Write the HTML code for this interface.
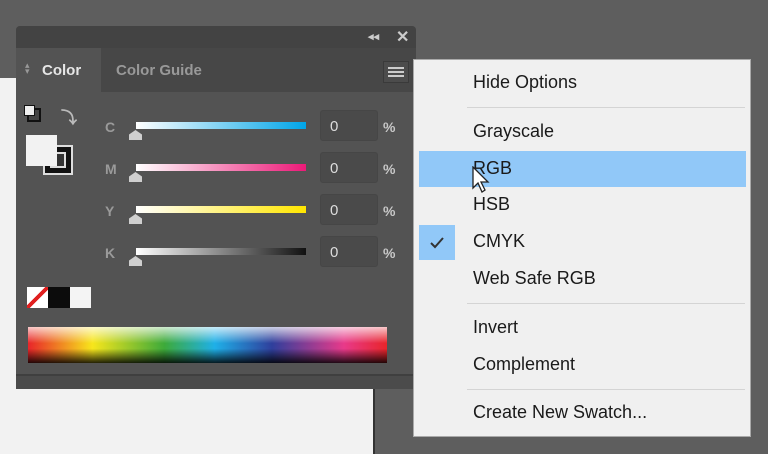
<!DOCTYPE html>
<html><head><style>
*{margin:0;padding:0;box-sizing:border-box}
body{width:768px;height:454px;overflow:hidden;background:#5e5e5e;position:relative;font-family:"Liberation Sans",sans-serif}
.a{position:absolute}
.menu div.t{position:absolute;left:59px;font-size:18px;color:#1a1a1a}
.sep{position:absolute;left:53px;right:5px;height:1px;background:#d4d4d4}
.lbl{position:absolute;left:105px;font-size:14px;font-weight:bold;color:#9a9a9a}
.bar{position:absolute;left:136px;width:170px;height:7px}
.thumb{position:absolute;left:129px;width:13px;height:10px;background:#cfcfcf;clip-path:polygon(50% 0,100% 45%,100% 100%,0 100%,0 45%)}
.box{position:absolute;left:320px;width:58px;height:31px;background:#4a4a4a;border:1px solid #464646;border-radius:3px;color:#ddd;font-size:15px;padding:7px 0 0 9px}
.pct{position:absolute;left:383px;font-size:14px;font-weight:bold;color:#c8c8c8}
</style></head><body>
<div class="a" style="left:0;top:78px;width:16px;height:376px;background:#f2f2f2"></div>
<div class="a" style="left:16px;top:388px;width:357px;height:66px;background:#f2f2f2"></div>
<div class="a" style="left:373px;top:388px;width:2px;height:66px;background:#333"></div>
<!-- panel -->
<div class="a" style="left:16px;top:26px;width:400px;height:363px;background:#535353;border-radius:4px 4px 0 0;overflow:hidden">
 <div class="a" style="left:0;top:0;width:400px;height:22px;background:#434343"></div>
 <div class="a" style="left:352px;top:4px;color:#ccc;font-size:11px;font-weight:bold">◂◂</div>
 <div class="a" style="left:380px;top:1px;color:#ccc;font-size:16px;font-weight:bold">✕</div>
 <div class="a" style="left:0;top:22px;width:400px;height:44px;background:#474747"></div>
 <div class="a" style="left:0;top:22px;width:85px;height:44px;background:#535353"></div>
 <div class="a" style="left:9px;top:36px;color:#999;font-size:9px;line-height:6px">▴<br>▾</div>
 <div class="a" style="left:26px;top:36px;color:#e6e6e6;font-size:15px;font-weight:bold">Color</div>
 <div class="a" style="left:100px;top:36px;color:#999;font-size:15px;font-weight:bold">Color Guide</div>
 <div class="a" style="left:367px;top:35px;width:26px;height:22px;border:1px solid #3a3a3a;background:#4c4c4c"></div>
 <div class="a" style="left:372px;top:41px;width:16px;height:2px;background:#ccc;box-shadow:0 4px 0 #ccc,0 8px 0 #ccc"></div>
 <!-- fill/stroke -->
 <div class="a" style="left:11px;top:82px;width:14px;height:14px;border:2px solid #111;background:#444"></div>
 <div class="a" style="left:8px;top:79px;width:11px;height:11px;background:#eee;border:1px solid #111"></div>
 <div class="a" style="left:45px;top:78px;color:#bbb;font-size:16px;font-weight:bold">⤵</div>
 <div class="a" style="left:27px;top:119px;width:30px;height:30px;background:#111;border:2px solid #ddd"></div>
 <div class="a" style="left:34px;top:126px;width:16px;height:16px;border:2px solid #ddd;background:#333"></div>
 <div class="a" style="left:10px;top:109px;width:31px;height:31px;background:#f2f2f2"></div>
 <div class="a" style="left:0;top:348px;width:400px;height:15px;background:#4b4b4b;border-top:2px solid #3f3f3f"></div>
</div>
<!-- sliders -->
<div class="lbl" style="top:119px">C</div><div class="bar" style="top:122px;background:linear-gradient(90deg,#fff,#00a5e8)"></div><div class="thumb" style="top:130px"></div><div class="box" style="top:110px">0</div><div class="pct" style="top:119px">%</div>
<div class="lbl" style="top:161px">M</div><div class="bar" style="top:164px;background:linear-gradient(90deg,#fff,#ec1a78)"></div><div class="thumb" style="top:172px"></div><div class="box" style="top:152px">0</div><div class="pct" style="top:161px">%</div>
<div class="lbl" style="top:203px">Y</div><div class="bar" style="top:206px;background:linear-gradient(90deg,#fff,#ffe600)"></div><div class="thumb" style="top:214px"></div><div class="box" style="top:194px">0</div><div class="pct" style="top:203px">%</div>
<div class="lbl" style="top:245px">K</div><div class="bar" style="top:248px;background:linear-gradient(90deg,#fff,#111)"></div><div class="thumb" style="top:256px"></div><div class="box" style="top:236px">0</div><div class="pct" style="top:245px">%</div>
<!-- swatches -->
<div class="a" style="left:27px;top:287px;width:21px;height:21px;background:linear-gradient(135deg,#fff 44%,#e02020 44%,#e02020 56%,#fff 56%)"></div>
<div class="a" style="left:48px;top:287px;width:22px;height:21px;background:#0c0c0c"></div>
<div class="a" style="left:70px;top:287px;width:21px;height:21px;background:#f4f4f4"></div>
<div class="a" style="left:28px;top:327px;width:359px;height:36px;background:linear-gradient(180deg,rgba(255,255,255,.75),rgba(255,255,255,0) 45%,rgba(0,0,0,0) 60%,rgba(0,0,0,.85)),linear-gradient(90deg,#e8252a,#f7e61c 18%,#3daa3a 38%,#1fb0e8 52%,#2f3f9c 68%,#e83a8a 88%,#e8252a)"></div>
<!-- menu -->
<div class="a menu" style="left:413px;top:59px;width:338px;height:378px;background:#f0f0f0;border:1px solid #aaa">
 <div class="t" style="top:12px">Hide Options</div>
 <div class="sep" style="top:47px"></div>
 <div class="t" style="top:61px">Grayscale</div>
 <div class="a" style="left:5px;top:91px;width:327px;height:36px;background:#91c8f8"></div>
 <div class="t" style="top:98px">RGB</div>
 <div class="t" style="top:134px">HSB</div>
 <div class="a" style="left:5px;top:165px;width:36px;height:35px;background:#91c8f8"></div>
 <svg class="a" style="left:15px;top:176px" width="16" height="13" viewBox="0 0 16 13"><path d="M2 7 L6 11 L14 2" fill="none" stroke="#333" stroke-width="2"/></svg>
 <div class="t" style="top:171px">CMYK</div>
 <div class="t" style="top:208px">Web Safe RGB</div>
 <div class="sep" style="top:243px"></div>
 <div class="t" style="top:257px">Invert</div>
 <div class="t" style="top:294px">Complement</div>
 <div class="sep" style="top:329px"></div>
 <div class="t" style="top:342px">Create New Swatch...</div>
 <svg class="a" style="left:57px;top:106px" width="20" height="30" viewBox="0 0 20 30"><path d="M2 1 L2 22 L7 17 L11 26 L14 24 L10 16 L17 16 Z" fill="#fff" stroke="#222" stroke-width="1.3"/></svg>
</div>
</body></html>
